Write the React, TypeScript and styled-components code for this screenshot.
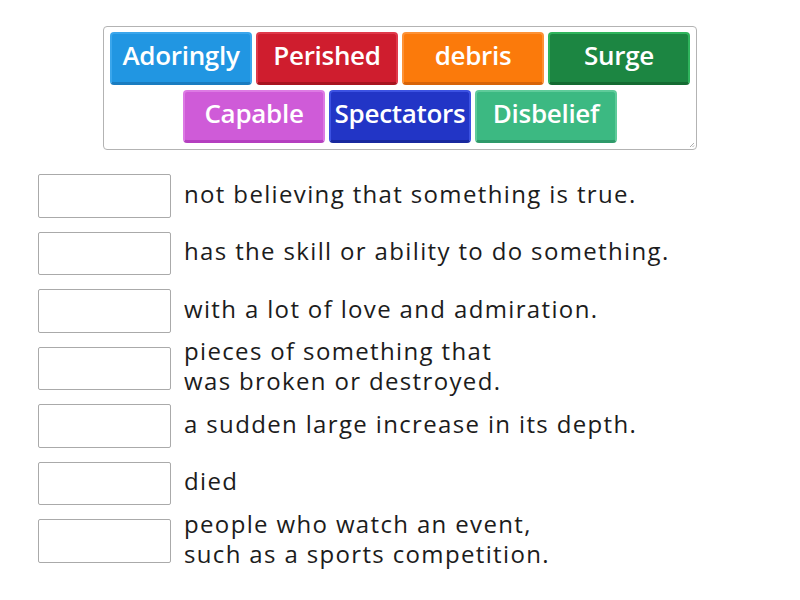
import { Fragment } from "react";
import styled, { createGlobalStyle } from "styled-components";

const GlobalStyle = createGlobalStyle`
  body { margin: 0; background: #fff; font-family: "Open Sans", "Liberation Sans", sans-serif; }
`;

const Page = styled.div`
  width: 800px;
  height: 600px;
  padding-top: 26px;
  box-sizing: border-box;
`;

const Bank = styled.div`
  position: relative;
  width: 594px;
  margin: 0 auto;
  box-sizing: border-box;
  border: 1px solid #b3b3b3;
  border-radius: 4px;
  padding: 5px 0 6px;
  display: flex;
  flex-wrap: wrap;
  justify-content: center;
  column-gap: 4px;
  row-gap: 5px;
`;

const Grip = styled.svg`
  position: absolute;
  right: 1px;
  bottom: 1px;
`;

const Tile = styled.div<{ $face: string; $light: string; $dark: string }>`
  width: 142px;
  height: 53px;
  box-sizing: border-box;
  border-radius: 4px;
  background: ${({ $face }) => $face};
  border: 2px solid ${({ $light }) => $light};
  border-bottom: 3px solid ${({ $dark }) => $dark};
  display: flex;
  align-items: center;
  justify-content: center;
  color: #fff;
  font-weight: 600;
  font-size: 26px;
  letter-spacing: -0.3px;
  white-space: nowrap;
  padding-bottom: 6px;
`;

const Rows = styled.div`
  margin-top: 24px;
  padding-left: 38px;
  display: grid;
  grid-template-columns: 133px 1fr;
  grid-auto-rows: 43.5px;
  column-gap: 13px;
  row-gap: 14px;
  align-items: center;
`;

const Slot = styled.div`
  height: 43.5px;
  box-sizing: border-box;
  border: 1px solid #aaaaaa;
  border-radius: 2px;
  background: #fff;
`;

const Definition = styled.div`
  font-size: 24px;
  line-height: 30px;
  letter-spacing: 1.35px;
  color: #1c1c1c;
  white-space: pre-line;
  margin-top: -4px;
`;

const tiles = [
  { word: "Adoringly", face: "#2196e2", light: "#3aa6ec", dark: "#1a7cc0" },
  { word: "Perished", face: "#cf1d2e", light: "#e0394a", dark: "#a8141f" },
  { word: "debris", face: "#fb7a0b", light: "#fd9236", dark: "#d86408" },
  { word: "Surge", face: "#1c8642", light: "#2fb45c", dark: "#146b32" },
  { word: "Capable", face: "#cf5bd8", light: "#dd7ae4", dark: "#b43fbf" },
  { word: "Spectators", face: "#2235c6", light: "#3c52e2", dark: "#18289e" },
  { word: "Disbelief", face: "#3cb982", light: "#5fcb9a", dark: "#2e9a6a" },
];

const definitions = [
  "not believing that something is true.",
  "has the skill or ability to do something.",
  "with a lot of love and admiration.",
  "pieces of something that\nwas broken or destroyed.",
  "a sudden large increase in its depth.",
  "died",
  "people who watch an event,\nsuch as a sports competition.",
];

export default function App() {
  return (
    <Page>
      <GlobalStyle />
      <Bank>
        {tiles.map((t) => (
          <Tile key={t.word} $face={t.face} $light={t.light} $dark={t.dark}>
            {t.word}
          </Tile>
        ))}
        <Grip width="6" height="6" viewBox="0 0 6 6">
          <path d="M5 1 L1 5 M5 3.5 L3.5 5" stroke="#999" strokeWidth="0.8" fill="none" />
        </Grip>
      </Bank>
      <Rows>
        {definitions.map((d) => (
          <Fragment key={d}>
            <Slot />
            <Definition>{d}</Definition>
          </Fragment>
        ))}
      </Rows>
    </Page>
  );
}
